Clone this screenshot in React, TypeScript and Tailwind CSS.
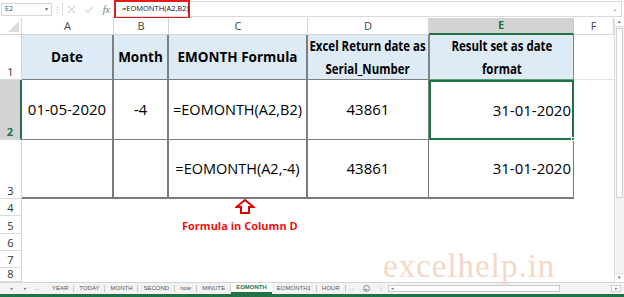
import React from 'react';

const cols = ['A', 'B', 'C', 'D', 'E', 'F'];
const tabs = ['YEAR', 'TODAY', 'MONTH', 'SECOND', 'now', 'MINUTE', 'EOMONTH', 'EOMONTH1', 'HOUR'];

const body = "font-['Open_Sans',sans-serif]";

function RowHead({ n, active = false }: { n: number; active?: boolean }) {
  return (
    <div
      className={`flex items-end justify-center border-b border-[#dadada] text-[11px] leading-[15px] ${
        active ? 'bg-[#d3d3d3] border-r-2 border-r-[#217346] text-[#217346] font-bold' : 'bg-white border-r border-r-[#d4d4d4] text-[#333]'
      }`}
    >
      {n}
    </div>
  );
}

function Narrow({ lines }: { lines: string[] }) {
  return (
    <span className="inline-block scale-x-[0.79] whitespace-nowrap text-center text-[14.5px] leading-[23px] font-bold text-black">
      {lines.map((l) => (
        <span key={l} className="block">
          {l}
        </span>
      ))}
    </span>
  );
}

export default function App() {
  return (
    <div className={`w-[624px] h-[297px] overflow-hidden flex flex-col bg-white ${body}`}>
      {/* formula bar */}
      <div className="h-[18px] flex items-center bg-white">
        <div className="ml-[1px] w-[51px] h-[13px] border border-[#d6d6d6] flex items-center justify-between px-[3px] text-[7px] text-[#444]">
          <span>E2</span>
          <span className="text-[6px] text-[#777]">▾</span>
        </div>
        <span className="w-[10px] text-center text-[8px] text-[#aaa]">⋮</span>
        <div className="w-[52px] h-[13px] border-l border-[#e0e0e0] flex items-center justify-around text-[#b5b5b5]">
          <svg width="9" height="9" viewBox="0 0 10 10"><path d="M1 1l8 8M9 1L1 9" stroke="#b5b5b5" strokeWidth="1" /></svg>
          <svg width="10" height="9" viewBox="0 0 10 10"><path d="M1 5.5l3 3L9.5 1.5" stroke="#b5b5b5" strokeWidth="1" fill="none" /></svg>
          <span className="font-['Liberation_Serif',serif] italic text-[10px] text-[#777]">fx</span>
        </div>
        <div className="flex-1 h-[16px] flex items-center border border-[#dadada] mr-[2px]">
          <div className="w-[76px] h-[19px] -ml-[1px] border-2 border-[#e31b1b] flex items-center pl-[6px] text-[7.5px] text-[#111]">
            =EOMONTH(A2,B2)
          </div>
          <div className="flex-1" />
          <span className="text-[7px] text-[#888] pr-[3px]">⌄</span>
        </div>
      </div>

      {/* sheet */}
      <div className="flex flex-1 min-h-0">
        <div className="relative flex-1 grid grid-cols-[22px_92px_55px_139px_121px_145px_1fr] grid-rows-[17px_45px_60px_59px_17px_18px_17px_17px_14px]">
          {/* corner */}
          <div className="relative border-r border-b border-[#d4d4d4]">
            <div className="absolute right-[2px] bottom-[2px] w-0 h-0 border-l-[11px] border-l-transparent border-b-[11px] border-b-[#dcdcdc]" />
          </div>
          {cols.map((c) => (
            <div
              key={c}
              className={`flex items-center justify-center text-[11px] ${
                c === 'E'
                  ? 'bg-[#d3d3d3] border-b-2 border-b-[#217346] border-r border-r-[#c8c8c8] text-[#217346] font-bold'
                  : 'bg-white border-b border-b-[#d4d4d4] border-r border-r-[#d4d4d4] text-[#444]'
              }`}
            >
              {c}
            </div>
          ))}

          {/* row 1 */}
          <RowHead n={1} />
          {['Date', 'Month', 'EMONTH Formula'].map((t) => (
            <div key={t} className="bg-[#ddebf7] border-r-2 border-b border-[#7f7f7f] flex items-center justify-center text-[13.5px] font-bold text-black">
              {t}
            </div>
          ))}
          <div className="bg-[#ddebf7] border-r border-b border-[#7f7f7f] flex items-center justify-center overflow-hidden">
            <Narrow lines={['Excel Return date as', 'Serial_Number']} />
          </div>
          <div className="bg-[#ddebf7] border-x border-x-[#5f9f75] border-b border-b-[#5f9f75] flex items-center justify-center overflow-hidden">
            <Narrow lines={['Result set as date', 'format']} />
          </div>
          <div className="border-b border-[#e2e2e2]" />

          {/* row 2 */}
          <RowHead n={2} active />
          <div className="border-r-2 border-b border-[#7f7f7f] flex items-center justify-center text-[15px] text-black">01-05-2020</div>
          <div className="border-r-2 border-b border-[#7f7f7f] flex items-center justify-center text-[15px] text-black">-4</div>
          <div className="border-r-2 border-b border-[#7f7f7f] flex items-center justify-center text-[14.5px] text-black">=EOMONTH(A2,B2)</div>
          <div className="border-r border-b border-[#7f7f7f] flex items-center justify-center text-[15px] text-black">43861</div>
          <div className="relative border-2 border-[#217346] flex items-center justify-end pr-[1px] text-[15px] text-black">
            31-01-2020
            <div className="absolute -right-[3px] -bottom-[3px] w-[4px] h-[4px] bg-[#217346] border border-white" />
          </div>
          <div />

          {/* row 3 */}
          <RowHead n={3} />
          <div className="border-r-2 border-b-2 border-[#7a7a7a]" />
          <div className="border-r-2 border-b-2 border-[#7a7a7a]" />
          <div className="border-r-2 border-b-2 border-[#7a7a7a] flex items-center justify-center text-[14.5px] text-black">=EOMONTH(A2,-4)</div>
          <div className="border-r border-b-2 border-[#7a7a7a] flex items-center justify-center text-[15px] text-black">43861</div>
          <div className="border-r border-b-2 border-[#7a7a7a] flex items-center justify-end pr-[2px] text-[15px] text-black">31-01-2020</div>
          <div />

          {/* rows 4-8 */}
          <RowHead n={4} />
          <div className="col-start-2 col-span-6 row-start-5 row-span-5 flex flex-col items-start pl-[160px]">
            <div className="flex flex-col items-center">
              <svg width="20" height="15" viewBox="0 0 20 15" className="ml-[10px]">
                <path d="M10 1L18.5 8H14V14H6V8H1.5Z" fill="white" stroke="#e00000" strokeWidth="2" strokeLinejoin="miter" />
              </svg>
              <div className="mt-[5px] text-[11px] font-bold text-[#ee1111] leading-[14px] whitespace-nowrap">Formula in Column D</div>
            </div>
          </div>
          <RowHead n={5} />
          <RowHead n={6} />
          <RowHead n={7} />
          <RowHead n={8} />

          {/* watermark */}
          <div className="absolute left-[383px] top-[231px] font-['Liberation_Serif',serif] text-[33px] leading-[34px] tracking-[1px] text-[#f4d7c5] select-none">
            excelhelp.in
          </div>
        </div>

        {/* vertical scrollbar */}
        <div className="w-[10px] flex flex-col border-l border-[#e2e2e2] bg-[#f3f3f3]">
          <div className="h-[9px] flex items-center justify-center text-[5px] text-[#666] bg-white border-b border-[#ddd]">▴</div>
          <div className="mx-[1px] mt-[1px] h-[170px] bg-white border border-[#d0d0d0]" />
          <div className="flex-1" />
          <div className="h-[9px] flex items-center justify-center text-[5px] text-[#666] bg-white border-t border-[#ddd]">▾</div>
        </div>
      </div>

      {/* sheet tabs */}
      <div className="h-[12px] flex items-stretch bg-[#f3f3f3] border-t border-[#d4d4d4] text-[6px] text-[#555] font-['Liberation_Sans',sans-serif]">
        <span className="w-[13px] flex items-center justify-end text-[5px] text-[#777]">◂</span>
        <span className="w-[14px] flex items-center justify-end text-[5px] text-[#777]">▸</span>
        <span className="w-[20px] flex items-center justify-center text-[#777]">...</span>
        {tabs.map((t) =>
          t === 'EOMONTH' ? (
            <span key={t} className="px-[5px] flex items-center bg-white border-b-2 border-[#217346] text-[#217346] font-bold">
              {t}
            </span>
          ) : (
            <span key={t} className="px-[5px] flex items-center border-r border-[#c8c8c8] my-[2px]">
              {t}
            </span>
          )
        )}
        <span className="px-[4px] flex items-center text-[#777]">...</span>
        <span className="px-[4px] flex items-center">
          <span className="w-[7px] h-[7px] rounded-full border border-[#888] flex items-center justify-center text-[6px] leading-none">+</span>
        </span>
        <span className="px-[4px] flex items-center text-[#aaa]">⋮</span>
        <div className="w-[172px] my-[2px] bg-white border border-[#c8c8c8] flex items-center pl-[2px] text-[5px] text-[#777]">◂</div>
        <div className="flex-1" />
        <span className="w-[10px] mr-[3px] my-[2px] bg-white border border-[#ccc] flex items-center justify-center text-[5px] text-[#777]">▸</span>
      </div>
      <div className="h-[3px] bg-[#217346]" />
    </div>
  );
}
